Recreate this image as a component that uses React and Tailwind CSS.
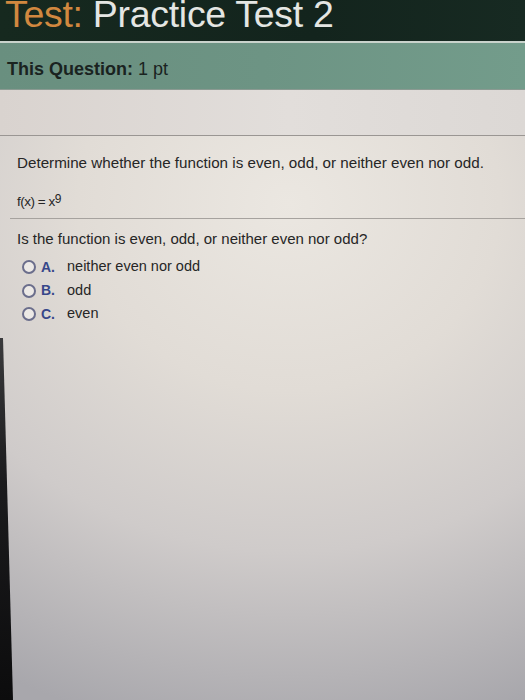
export default function App() {
  const options = [
    { l: "A.", t: "neither even nor odd" },
    { l: "B.", t: "odd" },
    { l: "C.", t: "even" },
  ];
  return (
    <div
      className="w-[525px] h-[700px] overflow-hidden flex flex-col"
      style={{ fontFamily: '"Liberation Sans", Arial, sans-serif' }}
    >
      <div className="h-[41px] shrink-0 bg-[linear-gradient(90deg,#16291f,#13241d_60%,#172a22)] flex items-start pl-[5px]">
        <div className="text-[37.5px] leading-[28px] whitespace-nowrap tracking-[-0.3px]">
          <span className="text-[#d1883f]">Test:</span>
          <span className="text-[#e4e6e3]"> Practice Test 2</span>
        </div>
      </div>
      <div className="h-[2px] shrink-0 bg-[#c9d3cc]" />
      <div className="h-[47px] shrink-0 bg-[linear-gradient(90deg,#698f7f,#6d9484_50%,#739c8b)] flex items-center pl-[7px] pt-[7px] border-b border-[#8b9a92]">
        <span className="text-[18px] text-[#1a231f] whitespace-nowrap">
          <span className="font-bold">This Question:</span> 1 pt
        </span>
      </div>
      <div className="h-[46px] shrink-0 bg-[linear-gradient(90deg,#d9d3cf,#e2dedb_55%,#dcd8d5)] border-b border-[#9a9693]" />
      <div className="relative flex-1 bg-[radial-gradient(ellipse_115%_95%_at_55%_12%,#ebe7e1,#e1dcd6_35%,#cfcbca_65%,#a8a7ac)]">
        <div className="pl-[17px] pt-[16px] text-[15.2px] text-[#262626] whitespace-nowrap">
          Determine whether the function is even, odd, or neither even nor odd.
        </div>
        <div className="pl-[17px] pt-[17px] text-[13.5px] text-[#262626] whitespace-nowrap tracking-[-0.5px]">
          f(x) = x<sup className="text-[12px] relative top-[-3px]">9</sup>
        </div>
        <div className="ml-[10px] mt-[6px] border-t border-[#a6a29e]" />
        <div className="pl-[17px] pt-[9px] text-[15px] text-[#262626] whitespace-nowrap">
          Is the function is even, odd, or neither even nor odd?
        </div>
        <div className="pl-[22px] pt-[8px] flex flex-col gap-[6px]">
          {options.map((o) => (
            <div key={o.l} className="flex items-center h-[17.5px] whitespace-nowrap">
              <span className="w-[14px] h-[14px] rounded-full border-2 border-[#6b6e8c] bg-[#ece9e6]" />
              <span className="ml-[5px] w-[26px] font-bold text-[14px] text-[#37478a]">{o.l}</span>
              <span className="text-[14.5px] text-[#262626]">{o.t}</span>
            </div>
          ))}
        </div>
        <svg
          className="absolute left-0 bottom-0"
          width="16"
          height="362"
          viewBox="0 0 16 362"
          preserveAspectRatio="none"
        >
          <defs>
            <linearGradient id="bz" x1="0" y1="0" x2="0" y2="1">
              <stop offset="0" stopColor="#3a3a3c" />
              <stop offset="0.4" stopColor="#1b1b1d" />
              <stop offset="1" stopColor="#0c0c0d" />
            </linearGradient>
          </defs>
          <polygon points="0,0 3,0 13,362 0,362" fill="url(#bz)" />
        </svg>
      </div>
    </div>
  );
}
